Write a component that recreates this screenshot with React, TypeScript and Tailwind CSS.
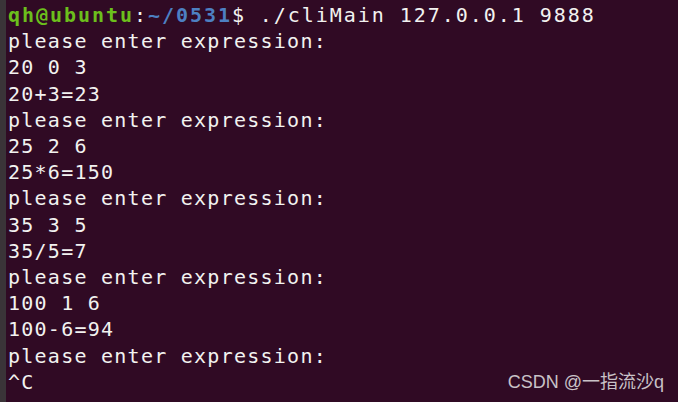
const lines = [
  "please enter expression:",
  "20 0 3",
  "20+3=23",
  "please enter expression:",
  "25 2 6",
  "25*6=150",
  "please enter expression:",
  "35 3 5",
  "35/5=7",
  "please enter expression:",
  "100 1 6",
  "100-6=94",
  "please enter expression:",
  "^C",
];

const App = () => {
  return (
    <div className="relative flex w-[678px] h-[402px] overflow-hidden bg-[#300a24]">
      <div className="w-[6px] shrink-0 bg-[#3a3438]" />
      <div
        className="flex-1 pl-[2px] pt-[2px] text-[20px] leading-[26.2px] tracking-[1.25px] text-[#f2f2f0] whitespace-pre"
        style={{ fontFamily: '"DejaVu Sans Mono", monospace' }}
      >
        <div className="tracking-[1.95px]">
          <span className="font-bold text-[#6cbf1c]">qh@ubuntu</span>
          <span>:</span>
          <span className="font-bold text-[#4d80c2]">~/0531</span>
          <span>$ ./cliMain 127.0.0.1 9888</span>
        </div>
        {lines.map((line, i) => (
          <div key={i}>{line}</div>
        ))}
      </div>
      <div
        className="absolute right-[14px] bottom-[9px] text-[18px] leading-[22px] text-[#c9c2c7]"
        style={{ fontFamily: '"Liberation Sans", "Noto Sans CJK SC", sans-serif' }}
      >
        CSDN @一指流沙q
      </div>
    </div>
  );
};

export default App;
